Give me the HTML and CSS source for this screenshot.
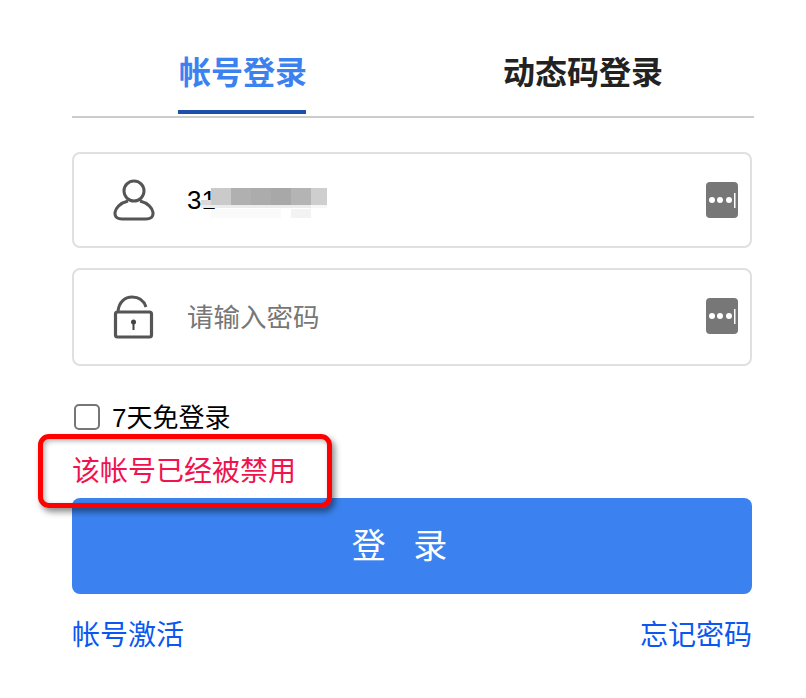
FILE: index.html
```html
<!DOCTYPE html>
<html lang="zh-CN">
<head>
	<meta charset="UTF-8">
	<title>登录</title>
	<link rel="stylesheet" href="styles.css">
</head>
<body>
	<div class="login">
		<ul class="tab-hd">
			<li class="tab-item tab-active">帐号登录</li>
			<li class="tab-item">动态码登录</li>
		</ul>

		<div class="field field-user">
			<svg class="field-icon" width="46" height="46" viewBox="0 0 46 46" fill="none" stroke="#555" stroke-width="3">
				<circle cx="22" cy="14" r="10"/>
				<path d="M16 24C8 26 3.500 31 3 35.500C2.500 40.500 6 42 10 42H34C38 42 41.500 40.500 41 35.500C40.500 31 36 26 28 24"/>
			</svg>
			<span class="field-value">31</span>
			<svg class="mosaic" width="128" height="34" viewBox="0 0 128 34">
				<rect x="0" y="12" width="10" height="8" fill="#dadada"/>
				<rect x="10" y="0" width="20" height="17" fill="#cacaca"/>
				<rect x="30" y="0" width="20" height="17" fill="#b0b0b0"/>
				<rect x="50" y="0" width="20" height="17" fill="#acacac"/>
				<rect x="70" y="0" width="20" height="17" fill="#a8a8a8"/>
				<rect x="90" y="0" width="20" height="17" fill="#b4b4b4"/>
				<rect x="110" y="0" width="16" height="17" fill="#cecece"/>
				<rect x="0" y="17" width="110" height="3" fill="#ececec"/>
				<rect x="110" y="17" width="16" height="3" fill="#f6f6f6"/>
				<rect x="10" y="21" width="70" height="9" fill="#fafafa"/>
				<rect x="90" y="21" width="20" height="9" fill="#f3f3f3"/>
			</svg>
			<svg class="key-icon" width="32" height="36" viewBox="0 0 32 36">
				<rect width="32" height="36" rx="4" fill="#777"/>
				<circle cx="6" cy="18" r="3" fill="#fff"/>
				<circle cx="14" cy="18" r="3" fill="#fff"/>
				<circle cx="23" cy="18" r="3" fill="#fff"/>
				<rect x="28" y="11" width="1.500" height="15" fill="#fff"/>
			</svg>
		</div>

		<div class="field field-pass">
			<svg class="field-icon" width="46" height="46" viewBox="0 0 46 46" fill="none" stroke="#555" stroke-width="3">
				<path d="M6 17C7 8 13 3 20 3C27 3 32 7 34 13" />
				<rect x="3.500" y="18" width="36" height="25" rx="2" stroke-width="3.200"/>
				<circle cx="21.500" cy="28" r="2.500" fill="#444" stroke="none"/>
				<rect x="20.500" y="29" width="2" height="7" fill="#444" stroke="none"/>
			</svg>
			<span class="field-hint">请输入密码</span>
			<svg class="key-icon" width="32" height="36" viewBox="0 0 32 36">
				<rect width="32" height="36" rx="4" fill="#777"/>
				<circle cx="6" cy="18" r="3" fill="#fff"/>
				<circle cx="14" cy="18" r="3" fill="#fff"/>
				<circle cx="23" cy="18" r="3" fill="#fff"/>
				<rect x="28" y="11" width="1.500" height="15" fill="#fff"/>
			</svg>
		</div>

		<label class="remember"><i class="check"></i>7天免登录</label>
		<div class="error">该帐号已经被禁用</div>
		<div class="mark"></div>
		<button class="submit">登 录</button>

		<div class="links">
			<a href="#">帐号激活</a>
			<a href="#">忘记密码</a>
		</div>
	</div>
</body>
</html>
```

FILE: styles.css
```css
*{box-sizing: border-box;}
ul{margin:0;padding: 0;}
li{list-style: none;}
a{text-decoration:none;}
body{
	margin: 0;
	background: #fff;
	font-family: "Liberation Sans", "Noto Sans CJK SC", sans-serif;
}
.login{
	position: relative;
	width: 806px;
	height: 698px;
	padding: 40px 52px 0 72px;
}
.tab-hd{
	display: flex;
	gap: 196px;
	height: 78px;
	padding-left: 106px;
	border-bottom: 2px solid #ccc;
}
.tab-item{
	height: 74px;
	text-indent: 1px;
	white-space: nowrap;
	font-size: 32px;
	line-height: 66px;
	font-weight: bold;
	color: #222;
}
.tab-active{
	width: 128px;
	color: #3b82f0;
	border-bottom: 4px solid #1c50ab;
}
.field{
	position: relative;
	display: flex;
	align-items: center;
	width: 680px;
	height: 96px;
	margin-top: 34px;
	padding: 0 12px 0 38px;
	border: 2px solid #e0e0e0;
	border-radius: 8px;
}
.field-pass{
	height: 98px;
	margin-top: 20px;
}
.field-icon{flex: none;}
.field-value{
	margin-left: 29px;
	font-size: 26px;
	color: #000;
}
.field-hint{
	margin-left: 29px;
	margin-bottom: 3px;
	font-size: 26.5px;
	color: #777;
}
.mosaic{
	position: absolute;
	left: 127px;
	top: 34px;
}
.key-icon{
	flex: none;
	margin-left: auto;
}
.field-pass .key-icon{margin-bottom: 2px;}
.remember{
	display: flex;
	align-items: center;
	height: 36px;
	margin-top: 31px;
	padding-left: 2px;
	font-size: 26px;
	color: #000;
}
.check{
	width: 26px;
	height: 26px;
	margin-top: 4px;
	margin-right: 12px;
	border: 2px solid #767676;
	border-radius: 5px;
}
.error{
	height: 55px;
	padding-top: 20px;
	font-size: 28px;
	line-height: 38px;
	color: #f0134d;
}
.mark{
	position: absolute;
	left: 38px;
	top: 434px;
	width: 294px;
	height: 74px;
	border: 5px solid #f00;
	border-radius: 11px;
	box-shadow: 3px 4px 6px rgba(0,0,0,.45), inset 2px 2px 5px rgba(0,0,0,.3);
	z-index: 2;
}
.submit{
	display: block;
	width: 680px;
	height: 96px;
	margin-top: 10px;
	padding: 0 16px 6px 0;
	border: 0;
	border-radius: 8px;
	background: #3b82f0;
	color: #fff;
	font-family: inherit;
	font-size: 34px;
	letter-spacing: 9px;
}
.links{
	display: flex;
	justify-content: space-between;
	width: 680px;
	margin-top: 22px;
	font-size: 28px;
	line-height: 40px;
}
.links a{color: #0b57f0;}
```
